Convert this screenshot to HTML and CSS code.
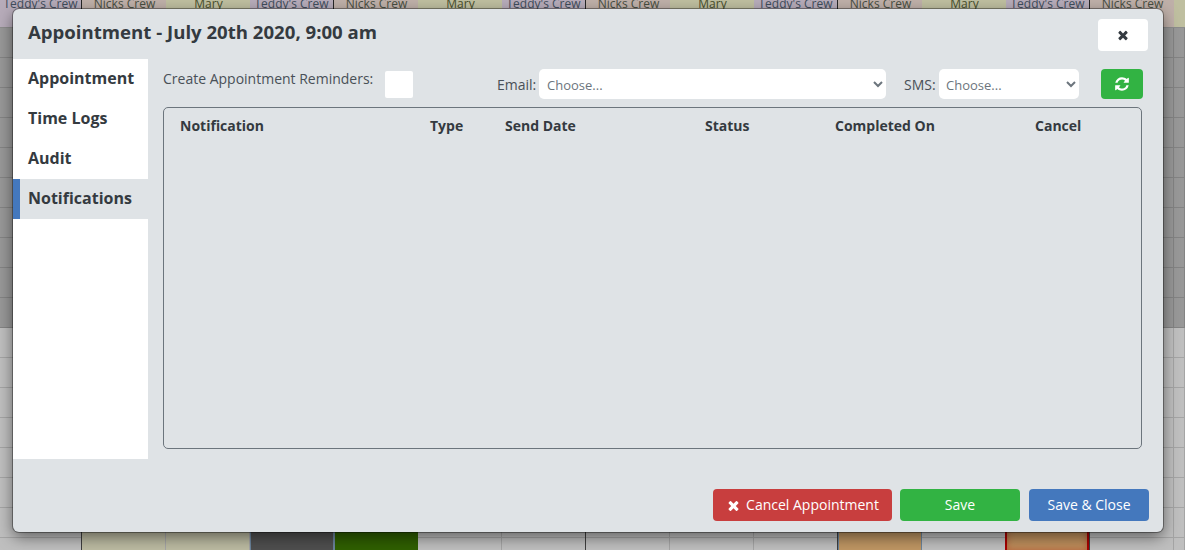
FILE: index.html
```html
<!DOCTYPE html>
<html lang="en">
  <head>
    <meta charset="UTF-8" />
    <meta name="viewport" content="width=device-width, initial-scale=1.0" />
    <title>Appointment</title>
    <link rel="stylesheet" href="styles.css">
  </head>
  <body>
    <!-- calendar behind the dialog -->
    <div class="schedule">
      <div class="crew-row">
        <div class="crew teddy">Teddy's Crew</div>
        <div class="crew nicks">Nicks Crew</div>
        <div class="crew mary">Mary</div>
        <div class="crew teddy">Teddy's Crew</div>
        <div class="crew nicks">Nicks Crew</div>
        <div class="crew mary">Mary</div>
        <div class="crew teddy">Teddy's Crew</div>
        <div class="crew nicks">Nicks Crew</div>
        <div class="crew mary">Mary</div>
        <div class="crew teddy">Teddy's Crew</div>
        <div class="crew nicks">Nicks Crew</div>
        <div class="crew mary">Mary</div>
        <div class="crew teddy">Teddy's Crew</div>
        <div class="crew nicks">Nicks Crew</div>
        <div class="crew mary"></div>
      </div>
      <div class="slots">
        <div class="slot day-end"></div>
        <div class="slot"><div class="event cream"></div></div>
        <div class="slot"><div class="event cream"></div></div>
        <div class="slot day-end"><div class="event grey"></div></div>
        <div class="slot"><div class="event green"></div></div>
        <div class="slot"></div>
        <div class="slot day-end"></div>
        <div class="slot"></div>
        <div class="slot"></div>
        <div class="slot day-end"></div>
        <div class="slot"><div class="event orange"></div></div>
        <div class="slot"></div>
        <div class="slot day-end"><div class="event flagged"></div></div>
        <div class="slot"></div>
        <div class="slot"></div>
      </div>
    </div>
    <div class="backdrop"></div>
    <div class="backdrop-upper"></div>

    <div class="modal">
      <div class="modal-header">
        <h1>Appointment - July 20th 2020, 9:00 am</h1>
        <button class="btn-close" type="button">
          <svg class="icon" viewBox="0 0 1792 1792"><path d="M1490 1322q0 40-28 68l-136 136q-28 28-68 28t-68-28l-294-294-294 294q-28 28-68 28t-68-28l-136-136q-28-28-28-68t28-68l294-294-294-294q-28-28-28-68t28-68l136-136q28-28 68-28t68 28l294 294 294-294q28-28 68-28t68 28l136 136q28 28 28 68t-28 68l-294 294 294 294q28 28 28 68z"/></svg>
        </button>
      </div>

      <div class="modal-body">
        <ul class="tabs">
          <li>Appointment</li>
          <li>Time Logs</li>
          <li>Audit</li>
          <li class="active">Notifications</li>
        </ul>

        <div class="tab-content">
          <div class="toolbar">
            <label class="reminder-label" for="reminders">Create Appointment Reminders:</label>
            <input class="reminder-check" type="checkbox" id="reminders" />
            <label class="email-label" for="email">Email:</label>
            <select class="email-select" id="email"><option>Choose...</option></select>
            <label class="sms-label" for="sms">SMS:</label>
            <select class="sms-select" id="sms"><option>Choose...</option></select>
            <button class="btn-refresh" type="button">
              <svg class="icon" viewBox="0 0 1792 1792"><path d="M1639 1056q0 5-1 7-64 268-268 434.5t-478 166.5q-146 0-282.5-55t-243.5-157l-129 129q-19 19-45 19t-45-19-19-45v-448q0-26 19-45t45-19h448q26 0 45 19t19 45-19 45l-137 137q71 66 161 102t187 36q134 0 250-65t186-179q11-17 53-117 8-23 30-23h192q13 0 22.5 9.5t9.5 22.5zm25-800v448q0 26-19 45t-45 19h-448q-26 0-45-19t-19-45 19-45l138-138q-148-137-349-137-134 0-250 65t-186 179q-11 17-53 117-8 23-30 23h-199q-13 0-22.5-9.5t-9.5-22.5v-7q65-268 270-434.5t480-166.5q146 0 284 55.5t245 156.5l130-129q19-19 45-19t45 19 19 45z"/></svg>
            </button>
          </div>

          <div class="table-box">
            <table>
              <thead>
                <tr>
                  <th class="col-name">Notification</th>
                  <th class="col-type">Type</th>
                  <th class="col-date">Send Date</th>
                  <th class="col-status">Status</th>
                  <th class="col-done">Completed On</th>
                  <th>Cancel</th>
                </tr>
              </thead>
            </table>
          </div>
        </div>
      </div>

      <div class="modal-footer">
        <button class="btn btn-cancel" type="button">
          <svg class="icon" viewBox="0 0 1792 1792"><path d="M1490 1322q0 40-28 68l-136 136q-28 28-68 28t-68-28l-294-294-294 294q-28 28-68 28t-68-28l-136-136q-28-28-28-68t28-68l294-294-294-294q-28-28-28-68t28-68l136-136q28-28 68-28t68 28l294 294 294-294q28-28 68-28t68 28l136 136q28 28 28 68t-28 68l-294 294 294 294q28 28 28 68z"/></svg>
          Cancel Appointment
        </button>
        <button class="btn btn-save" type="button">Save</button>
        <button class="btn btn-close-save" type="button">Save &amp; Close</button>
      </div>
    </div>
  </body>
</html>
```

FILE: styles.css
```css
* {
  margin: 0;
  padding: 0;
  box-sizing: border-box;
}

body {
  font-family: "Open Sans", "Liberation Sans", sans-serif;
  background: #fff;
  width: 1185px;
  height: 550px;
  overflow: hidden;
}

/* calendar behind the dialog */
.schedule {
  height: 550px;
}

.crew-row,
.slots {
  display: grid;
  grid-template-columns: 82px repeat(13, 84px) 1fr;
}

.crew-row {
  height: 28px;
  overflow: hidden;
  border-bottom: 1px solid #bbb;
}

.crew {
  font-size: 12px;
  line-height: 7px;
  text-align: center;
  color: #56687c;
  overflow: hidden;
}

.crew.teddy {
  background: #f5e6f8;
  border-right: 1px solid #333;
}

.crew.nicks {
  background: #ffebe2;
  color: #5f6a58;
  padding-left: 1px;
}

.crew.mary {
  background: #ffffd6;
  color: #5f6a3a;
  padding-left: 1px;
}

.slots {
  height: 522px;
  background-image: linear-gradient(#ddd 1px, transparent 1px);
  background-size: 100% 30px;
  background-position: 0 29px;
}

.slot {
  display: flex;
  flex-direction: column;
  justify-content: flex-end;
  border-right: 1px solid #ddd;
}

.slot.day-end {
  border-right-color: #555;
}

.event {
  height: 70px;
}

.event.cream {
  background: #fbfad8;
}

.event.grey {
  background: #6a6a6a;
  border-left: 1px solid #8fb0d0;
  border-right: 1px solid #8fb0d0;
  margin-right: -1px;
}

.event.green {
  background: #3f7f00;
  border-left: 1px solid #8fb0d0;
  margin-right: -1px;
}

.event.orange {
  background: #ffc984;
  border-left: 1px solid #8fb0d0;
  border-right: 1px solid #8fb0d0;
  margin-right: -1px;
}

.event.flagged {
  background: #ffc07c;
  border-left: 2px solid #e00000;
  border-right: 2px solid #e00000;
  margin-left: -1px;
  box-shadow: inset 0 0 6px rgba(230, 60, 30, 0.5);
}

.backdrop {
  position: absolute;
  top: 0;
  left: 0;
  width: 1185px;
  height: 550px;
  background: rgba(0, 0, 0, 0.25);
}

.backdrop-upper {
  position: absolute;
  top: 28px;
  left: 0;
  width: 1185px;
  height: 300px;
  background: rgba(0, 0, 0, 0.2);
}

/* dialog */
.modal {
  position: absolute;
  top: 9px;
  left: 13px;
  width: 1150px;
  height: 523px;
  display: flex;
  flex-direction: column;
  background: #dfe3e6;
  border-radius: 6px;
  color: #343a40;
  box-shadow: 0 0 0 1px rgba(0, 0, 0, 0.35), 0 5px 15px rgba(0, 0, 0, 0.5);
}

.modal-header {
  height: 50px;
  display: flex;
  justify-content: space-between;
  padding: 10px 15px 0 15px;
}

h1 {
  font-size: 18.6px;
  line-height: 26px;
  font-weight: 700;
}

.icon {
  width: 14px;
  height: 14px;
  fill: currentColor;
  display: block;
}

button {
  font-family: inherit;
  border: none;
  cursor: pointer;
}

.btn-close {
  width: 50px;
  height: 32px;
  background: #fff;
  color: #343a40;
  border-radius: 4px;
  display: flex;
  align-items: center;
  justify-content: center;
}

.modal-body {
  height: 400px;
  display: flex;
}

.tabs {
  width: 135px;
  background: #fff;
  list-style: none;
}

.tabs li {
  height: 40px;
  line-height: 38px;
  padding-left: 15px;
  font-size: 16px;
  font-weight: 700;
}

.tabs li.active {
  background: #dfe3e6;
  border-left: 7px solid #4478bd;
  padding-left: 8px;
}

.tab-content {
  width: 980px;
  margin-left: 15px;
  padding-top: 10px;
}

.toolbar {
  display: flex;
  align-items: flex-start;
  height: 38px;
  font-size: 14px;
  color: #495057;
}

.reminder-label {
  line-height: 20px;
  width: 222px;
}

.reminder-check {
  appearance: none;
  width: 28px;
  height: 27px;
  margin-top: 2px;
  background: #fff;
  border-radius: 2px;
}

.email-label,
.sms-label {
  line-height: 32px;
}

.email-label {
  margin-left: 84px;
  width: 42px;
}

.sms-label {
  margin-left: 18px;
  width: 35px;
}

select {
  height: 30px;
  border: none;
  border-radius: 5px;
  background-color: #fff;
  font-family: inherit;
  font-size: 13px;
  color: #6c757d;
  padding: 2px 0 0 4px;
}

.email-select {
  width: 347px;
}

.sms-select {
  width: 140px;
  padding-left: 3px;
}

.btn-refresh {
  width: 42px;
  height: 30px;
  margin-left: 22px;
  background: #32b343;
  color: #fff;
  border-radius: 4px;
  display: flex;
  align-items: center;
  justify-content: center;
}

.btn-refresh .icon {
  width: 16px;
  height: 16px;
}

.table-box {
  width: 979px;
  height: 342px;
  border: 1px solid #6c757d;
  border-radius: 5px;
  padding-left: 16px;
}

table {
  width: 100%;
  table-layout: fixed;
  border-collapse: collapse;
}

th {
  text-align: left;
  font-size: 14px;
  font-weight: 700;
  line-height: 20px;
  padding-top: 8px;
  color: #343a40;
}

.col-name {
  width: 250px;
}

.col-type {
  width: 75px;
}

.col-date {
  width: 200px;
}

.col-status {
  width: 130px;
}

.col-done {
  width: 200px;
}

.modal-footer {
  display: flex;
  justify-content: flex-end;
  gap: 8px;
  padding: 30px 14px 0 0;
}

.btn {
  height: 32px;
  width: 120px;
  padding-bottom: 2px;
  color: #fff;
  font-size: 14px;
  border-radius: 4px;
  display: flex;
  align-items: center;
  justify-content: center;
}

.btn .icon {
  width: 15px;
  height: 15px;
  margin-right: 5px;
  margin-top: 2px;
}

.btn-cancel {
  width: 179px;
  background: #c83e3e;
}

.btn-save {
  background: #32b343;
}

.btn-close-save {
  background: #4478bd;
  margin-left: 1px;
}
```
